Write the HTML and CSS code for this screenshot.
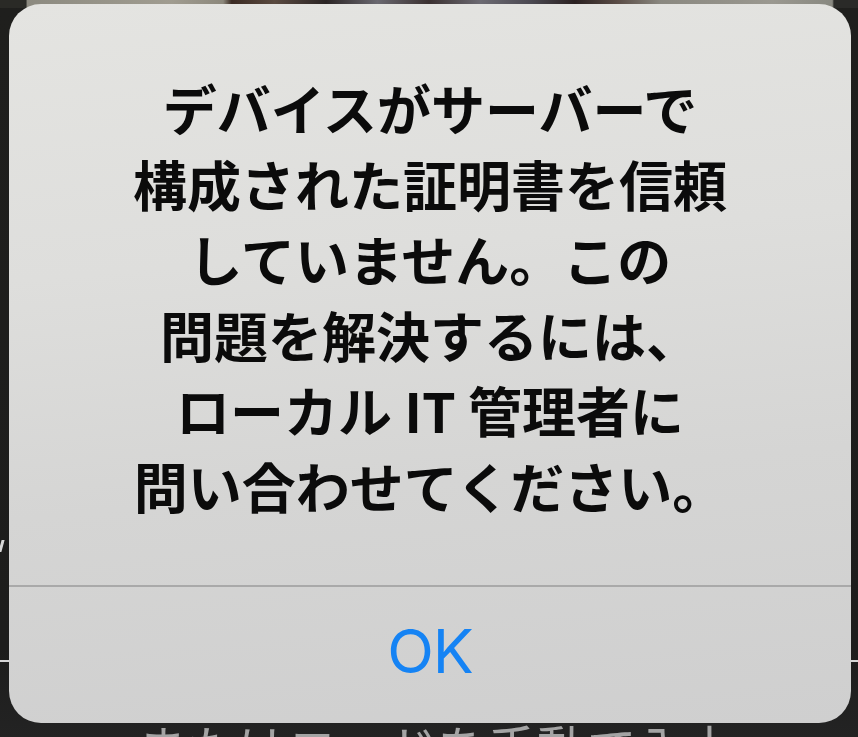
FILE: index.html
```html
<!DOCTYPE html>
<html lang="ja">
<head>
<meta charset="utf-8">
<title>Alert</title>
<link rel="stylesheet" href="styles.css">
</head>
<body>
<div class="screen">
  <div class="photo-strip"></div>
  <div class="edge-mark left-mark"></div>
  <div class="edge-line left-line"></div>
  <div class="edge-line right-line"></div>
  <p class="under-text">またはコードを手動で入力</p>

  <div class="alert" role="alertdialog">
    <div class="alert-message">
      デバイスがサーバーで<br>
      構成された証明書を信頼<br>
      していません。この<br>
      問題を解決するには、<br>
      ローカル IT 管理者に<br>
      問い合わせてください。
    </div>
    <div class="alert-actions">
      <button class="alert-button" type="button">OK</button>
    </div>
  </div>
</div>
</body>
</html>
```

FILE: styles.css
```css
html, body {
  margin: 0;
  padding: 0;
}

body {
  width: 858px;
  height: 737px;
  overflow: hidden;
  background: #1d1d1b;
  font-family: "Noto Sans CJK JP", "Noto Sans", sans-serif;
}

.screen {
  position: relative;
  width: 858px;
  height: 737px;
  overflow: hidden;
  background: linear-gradient(180deg, #1f1f1d 0%, #1d1d1c 88%, #232323 100%);
}

.photo-strip {
  height: 8px;
  background: linear-gradient(90deg,
    #2a2a26 0%, #2a2a26 3%,
    #8c8a80 3.2%, #a09c90 20%, #8c887c 26%,
    #3a2a22 27%, #5a4a40 32%, #2a2424 38%, #6a6870 44%, #3a3030 50%,
    #6c6a72 56%, #4a4850 62%, #2a2020 67%, #5a4c46 72%, #8a8880 77%,
    #9a9890 90%, #888880 97%, #2a2a28 97.2%, #2a2a28 100%);
}

.edge-mark {
  position: absolute;
  left: 0;
  top: 540px;
  width: 3px;
  height: 12px;
  background: #d8d8d8;
  transform: skewX(-15deg);
}

.edge-line {
  position: absolute;
  top: 660px;
  height: 2px;
  background: #d6d6d6;
}

.left-line {
  left: 0;
  width: 10px;
}

.right-line {
  right: 0;
  width: 8px;
}

.under-text {
  position: absolute;
  left: 137px;
  top: 716px;
  margin: 0;
  font-size: 50px;
  line-height: 60px;
  color: #a4a4a4;
  white-space: nowrap;
}

.alert {
  position: absolute;
  left: 9px;
  top: 4px;
  width: 842px;
  height: 719px;
  border-radius: 32px;
  background: linear-gradient(175deg, #e4e4e1 0%, #dededc 35%, #d5d5d4 65%, #cfcfcf 100%);
  display: flex;
  flex-direction: column;
  overflow: hidden;
}

.alert-message {
  padding-top: 66px;
  height: 516px;
  box-sizing: border-box;
  text-align: center;
  font-family: "Noto Sans CJK JP", sans-serif;
  font-weight: 700;
  font-size: 54px;
  line-height: 75.5px;
  color: #0b0b0b;
  border-bottom: 2px solid #a9a9a9;
  margin-bottom: 0;
  flex: 0 0 auto;
  box-sizing: content-box;
  height: auto;
  padding-bottom: 62px;
}

.alert-actions {
  flex: 1 1 auto;
  display: flex;
  align-items: center;
  justify-content: center;
}

.alert-button {
  border: 0;
  background: transparent;
  padding: 0;
  margin-top: -8px;
  font-family: Inter, "Noto Sans", sans-serif;
  font-weight: 400;
  font-size: 61px;
  color: #1583f4;
  letter-spacing: -1px;
}
```
